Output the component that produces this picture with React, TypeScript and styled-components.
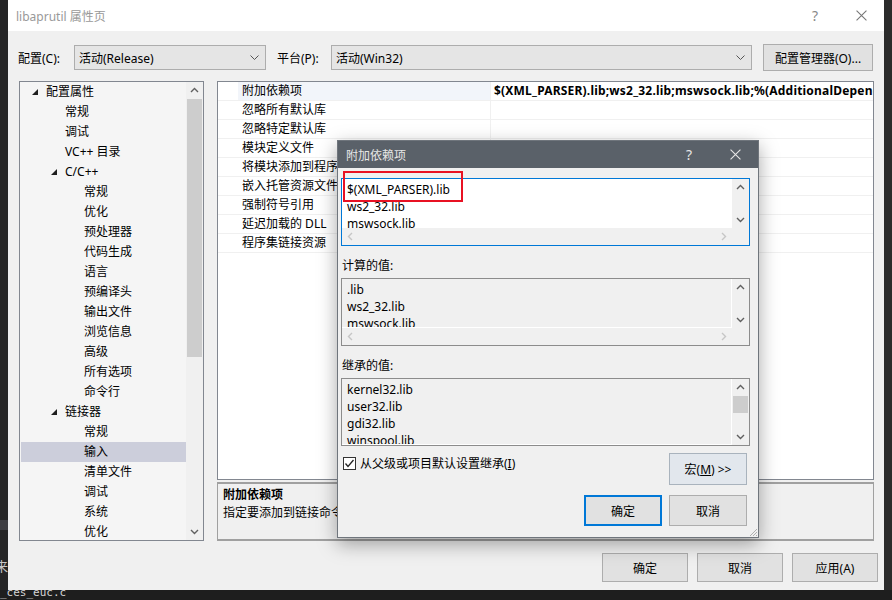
import React from "react";
import styled, { createGlobalStyle, css } from "styled-components";

const GlobalStyle = createGlobalStyle`
  html, body {
    margin: 0;
    padding: 0;
    background: #2b2b2b;
  }
  body {
    font-family: "Noto Sans", "Noto Sans CJK SC", sans-serif;
    font-size: 12px;
    color: #000;
  }
  * {
    box-sizing: border-box;
  }
`;

const FONT = `"Noto Sans", "Noto Sans CJK SC", sans-serif`;

const Desktop = styled.div`
  position: relative;
  width: 892px;
  height: 600px;
  overflow: hidden;
  background: #2b2b2b;
  display: grid;
  grid-template-columns: 8px 876px 8px;
  grid-template-rows: 590px 10px;
`;

const EditorGutter = styled.div`
  grid-column: 1;
  grid-row: 1;
  background: #252526;
  display: flex;
  flex-direction: column;
  overflow: hidden;
  color: #c8c8c8;
`;

const GutterBand = styled.div`
  margin-top: 520px;
  height: 10px;
  background: #3e3e42;
`;

const GutterGlyph = styled.div`
  margin-top: 28px;
  font-size: 13px;
  line-height: 16px;
  white-space: nowrap;
  margin-left: -5px;
`;

const EditorTab = styled.div`
  grid-column: 1 / 4;
  grid-row: 2;
  background: #1e1e1e;
  color: #d4d4d4;
  font-family: "DejaVu Sans Mono", monospace;
  font-size: 11px;
  line-height: 6px;
  white-space: nowrap;
  overflow: hidden;
`;

const Window = styled.div`
  grid-column: 2;
  grid-row: 1;
  background: #f0f0f0;
  display: flex;
  flex-direction: column;
  min-width: 0;
`;

const TitleBar = styled.div`
  height: 31px;
  flex: none;
  background: #fff;
  display: flex;
  align-items: center;
  padding-left: 8px;
  color: #999;
  font-size: 12px;
`;

const TitleText = styled.div`
  flex: 1;
`;

const CaptionButton = styled.div<{ $light?: boolean }>`
  width: 46px;
  height: 31px;
  display: flex;
  align-items: center;
  justify-content: center;
  color: ${(p) => (p.$light ? "#e6e6e6" : "#888")};
  font-size: 14px;
`;

const ConfigRow = styled.div`
  display: flex;
  align-items: center;
  height: 27px;
  margin-top: 13px;
  padding-left: 10px;
`;

const Label = styled.span<{ $width: number }>`
  width: ${(p) => p.$width}px;
  flex: none;
  white-space: nowrap;
`;

const Combo = styled.div<{ $width: number }>`
  width: ${(p) => p.$width}px;
  height: 25px;
  border: 1px solid #adadad;
  background: #e5e5e5;
  display: flex;
  align-items: center;
  padding: 0 6px 0 4px;
  margin-right: 11px;
`;

const ComboText = styled.span`
  flex: 1;
`;

const PushButton = styled.button<{ $w: number; $h: number; $default?: boolean; $tint?: boolean }>`
  width: ${(p) => p.$w}px;
  height: ${(p) => p.$h}px;
  flex: none;
  font-family: ${FONT};
  font-size: 12px;
  color: #000;
  padding: 0;
  background: ${(p) => (p.$tint ? "#e2e7ed" : "#e1e1e1")};
  border: 1px solid ${(p) => (p.$tint ? "#a9b3bd" : "#adadad")};
  ${(p) =>
    p.$default &&
    css`
      border: 2px solid #0078d7;
    `}
`;

const MainArea = styled.div`
  display: flex;
  gap: 13px;
  height: 460px;
  margin-top: 10px;
  padding: 0 10px 0 11px;
  min-width: 0;
`;

const Tree = styled.div`
  width: 185px;
  flex: none;
  border: 1px solid #828790;
  background: #f5f5f5;
  display: flex;
  overflow: hidden;
`;

const TreeList = styled.div`
  flex: 1;
  padding-left: 1px;
  overflow: hidden;
`;

const TreeRow = styled.div<{ $level: number; $selected?: boolean }>`
  height: 20px;
  line-height: 20px;
  display: flex;
  align-items: center;
  padding-left: ${(p) => 6 + p.$level * 19}px;
  background: ${(p) => (p.$selected ? "#cccedb" : "transparent")};
  white-space: nowrap;
`;

const Expander = styled.span`
  width: 19px;
  flex: none;
  display: flex;
  align-items: center;
  padding-left: 5px;
`;

const VScroll = styled.div<{ $bg?: string }>`
  width: 17px;
  flex: none;
  background: ${(p) => p.$bg || "#f0f0f0"};
  display: flex;
  flex-direction: column;
  align-items: stretch;
`;

const ArrowBox = styled.div`
  height: 17px;
  flex: none;
  display: flex;
  align-items: center;
  justify-content: center;
`;

const Track = styled.div`
  flex: 1;
  display: flex;
  flex-direction: column;
`;

const Thumb = styled.div<{ $offset: number; $size: number }>`
  margin: ${(p) => p.$offset}px 1px 0;
  height: ${(p) => p.$size}px;
  background: #cdcdcd;
`;

const RightColumn = styled.div`
  flex: 1;
  min-width: 0;
  display: flex;
  flex-direction: column;
  gap: 2px;
`;

const PropGrid = styled.div`
  height: 399px;
  border: 1px solid #828790;
  background: #fff;
  overflow: hidden;
`;

const PropRow = styled.div`
  display: flex;
  height: 19px;
  line-height: 18px;
  border-bottom: 1px solid #f0f0f0;
  white-space: nowrap;
  min-width: 0;
`;

const Gutter = styled.div`
  width: 20px;
  flex: none;
  background: #fff;
`;

const PropName = styled.div<{ $active?: boolean }>`
  width: 253px;
  flex: none;
  padding-left: 4px;
  border-right: 1px solid #f0f0f0;
  background: ${(p) => (p.$active ? "#f2f5fa" : "#fff")};
  overflow: hidden;
`;

const PropValue = styled.div`
  flex: 1;
  min-width: 0;
  padding-left: 3px;
  font-weight: 700;
  letter-spacing: 0.2px;
  overflow: hidden;
`;

const Description = styled.div`
  flex: 1;
  border: 1px solid #a0a0a0;
  border-top: 2px solid #a0a0a0;
  border-bottom: 2px solid #a0a0a0;
  background: #f0f0f0;
  padding: 2px 5px;
  line-height: 18px;
  overflow: hidden;
  white-space: nowrap;
`;

const DescTitle = styled.div`
  font-weight: 700;
`;

const Footer = styled.div`
  display: flex;
  justify-content: flex-end;
  gap: 9px;
  margin-top: 12px;
  padding-right: 6px;
`;

/* ---------- dialog ---------- */

const Dialog = styled.div`
  position: absolute;
  left: 337px;
  top: 140px;
  width: 422px;
  height: 398px;
  background: #f0f0f0;
  border: 1px solid #6f757c;
  box-shadow: 0 6px 18px rgba(0, 0, 0, 0.35);
  display: flex;
  flex-direction: column;
`;

const DialogTitle = styled.div`
  height: 27px;
  flex: none;
  background: #5a6169;
  color: #e6e6e6;
  display: flex;
  align-items: center;
  padding-left: 8px;
`;

const DialogBody = styled.div`
  position: relative;
  flex: 1;
  padding: 10px 8px 0 3px;
  display: flex;
  flex-direction: column;
`;

const RedMark = styled.div`
  position: absolute;
  left: 5px;
  top: 3px;
  width: 120px;
  height: 31px;
  border: 2px solid #e81123;
  pointer-events: none;
`;

const ListBox = styled.div<{ $focused?: boolean }>`
  height: 68px;
  flex: none;
  border: 1px solid ${(p) => (p.$focused ? "#0078d7" : "#8c8c8c")};
  background: ${(p) => (p.$focused ? "#fff" : "#f0f0f0")};
  display: flex;
  flex-direction: column;
`;

const ListMain = styled.div`
  flex: 1;
  display: flex;
  min-height: 0;
`;

const ListLines = styled.div<{ $focused?: boolean }>`
  flex: 1;
  padding: 2px 0 0 5px;
  line-height: 17px;
  overflow: hidden;
  border-right: 1px solid #fff;
  border-bottom: ${(p) => (p.$focused ? "none" : "1px solid #fff")};
`;

const HScroll = styled.div`
  height: 17px;
  flex: none;
  display: flex;
  background: #f0f0f0;
`;

const HArrow = styled.div`
  width: 17px;
  display: flex;
  align-items: center;
  justify-content: center;
`;

const HTrack = styled.div`
  flex: 1;
`;

const Corner = styled.div`
  width: 17px;
  background: #f0f0f0;
`;

const FieldLabel = styled.div`
  margin: 11px 0 3px 1px;
  line-height: 18px;
`;

const OptionRow = styled.div`
  display: flex;
  align-items: flex-start;
  margin-top: 7px;
  padding-right: 3px;
`;

const CheckLabel = styled.label`
  flex: 1;
  display: flex;
  align-items: center;
  gap: 4px;
  padding: 1px 0 0 2px;
`;

const CheckBox = styled.span`
  width: 13px;
  height: 13px;
  border: 1px solid #333;
  background: #fff;
  display: flex;
  align-items: center;
  justify-content: center;
`;

const ButtonRow = styled.div`
  display: flex;
  justify-content: flex-end;
  gap: 7px;
  margin-top: 10px;
  padding-right: 3px;
`;

const Grip = styled.div`
  position: absolute;
  right: 0;
  bottom: 0;
  width: 10px;
  height: 10px;
  display: flex;
`;

const U = styled.span`
  text-decoration: underline;
`;

type Dir = "up" | "down" | "left" | "right";

const Chevron: React.FC<{ dir: Dir; color?: string }> = ({ dir, color = "#606060" }) => {
  const pts: Record<Dir, string> = {
    up: "1,6 4.5,2.5 8,6",
    down: "1,3 4.5,6.5 8,3",
    left: "6,1 2.5,4.5 6,8",
    right: "3,1 6.5,4.5 3,8",
  };
  return (
    <svg width="9" height="9" viewBox="0 0 9 9">
      <polyline points={pts[dir]} fill="none" stroke={color} strokeWidth="1.4" />
    </svg>
  );
};

const CloseGlyph: React.FC<{ color: string; size: number }> = ({ color, size }) => (
  <svg width={size} height={size} viewBox="0 0 10 10">
    <path d="M0.5 0.5 L9.5 9.5 M9.5 0.5 L0.5 9.5" stroke={color} strokeWidth="1" />
  </svg>
);

const DropGlyph = () => (
  <svg width="9" height="6" viewBox="0 0 9 6">
    <polyline points="0.5,0.5 4.5,4.5 8.5,0.5" fill="none" stroke="#555" strokeWidth="1" />
  </svg>
);

const Triangle = () => (
  <svg width="7" height="7" viewBox="0 0 7 7">
    <polygon points="6,0 6,6 0,6" fill="#1e1e1e" />
  </svg>
);

const treeItems: { label: string; level: number; open?: boolean; selected?: boolean }[] = [
  { label: "配置属性", level: 0, open: true },
  { label: "常规", level: 1 },
  { label: "调试", level: 1 },
  { label: "VC++ 目录", level: 1 },
  { label: "C/C++", level: 1, open: true },
  { label: "常规", level: 2 },
  { label: "优化", level: 2 },
  { label: "预处理器", level: 2 },
  { label: "代码生成", level: 2 },
  { label: "语言", level: 2 },
  { label: "预编译头", level: 2 },
  { label: "输出文件", level: 2 },
  { label: "浏览信息", level: 2 },
  { label: "高级", level: 2 },
  { label: "所有选项", level: 2 },
  { label: "命令行", level: 2 },
  { label: "链接器", level: 1, open: true },
  { label: "常规", level: 2 },
  { label: "输入", level: 2, selected: true },
  { label: "清单文件", level: 2 },
  { label: "调试", level: 2 },
  { label: "系统", level: 2 },
  { label: "优化", level: 2 },
];

const properties = [
  { name: "附加依赖项", value: "$(XML_PARSER).lib;ws2_32.lib;mswsock.lib;%(AdditionalDependencies)" },
  { name: "忽略所有默认库", value: "" },
  { name: "忽略特定默认库", value: "" },
  { name: "模块定义文件", value: "" },
  { name: "将模块添加到程序集", value: "" },
  { name: "嵌入托管资源文件", value: "" },
  { name: "强制符号引用", value: "" },
  { name: "延迟加载的 DLL", value: "" },
  { name: "程序集链接资源", value: "" },
];

interface IListProps {
  lines: string[];
  focused?: boolean;
  hScroll?: boolean;
  thumb?: boolean;
}

const ValueList: React.FC<IListProps> = ({ lines, focused, hScroll, thumb }) => (
  <ListBox $focused={focused}>
    <ListMain>
      <ListLines $focused={focused}>
        {lines.map((l, i) => (
          <div key={i}>{l}</div>
        ))}
      </ListLines>
      <VScroll>
        <ArrowBox>
          <Chevron dir="up" />
        </ArrowBox>
        <Track>{thumb && <Thumb $offset={0} $size={17} />}</Track>
        <ArrowBox>
          <Chevron dir="down" />
        </ArrowBox>
      </VScroll>
    </ListMain>
    {hScroll && (
      <HScroll>
        <HArrow>
          <Chevron dir="left" color="#c6c6c6" />
        </HArrow>
        <HTrack />
        <HArrow>
          <Chevron dir="right" color="#c6c6c6" />
        </HArrow>
        <Corner />
      </HScroll>
    )}
  </ListBox>
);

export default function App() {
  return (
    <>
      <GlobalStyle />
      <Desktop>
        <EditorGutter>
          <GutterBand />
          <GutterGlyph>来</GutterGlyph>
        </EditorGutter>
        <Window>
          <TitleBar>
            <TitleText>libaprutil 属性页</TitleText>
            <CaptionButton>?</CaptionButton>
            <CaptionButton>
              <CloseGlyph color="#777" size={11} />
            </CaptionButton>
          </TitleBar>

          <ConfigRow>
            <Label $width={56}>配置(C):</Label>
            <Combo $width={192}>
              <ComboText>活动(Release)</ComboText>
              <DropGlyph />
            </Combo>
            <Label $width={54}>平台(P):</Label>
            <Combo $width={421}>
              <ComboText>活动(Win32)</ComboText>
              <DropGlyph />
            </Combo>
            <PushButton $w={110} $h={27}>
              配置管理器(O)...
            </PushButton>
          </ConfigRow>

          <MainArea>
            <Tree>
              <TreeList>
                {treeItems.map((t, i) => (
                  <TreeRow key={i} $level={t.level} $selected={t.selected}>
                    <Expander>{t.open && <Triangle />}</Expander>
                    {t.label}
                  </TreeRow>
                ))}
              </TreeList>
              <VScroll>
                <ArrowBox>
                  <Chevron dir="up" />
                </ArrowBox>
                <Track>
                  <Thumb $offset={0} $size={258} />
                </Track>
                <ArrowBox>
                  <Chevron dir="down" />
                </ArrowBox>
              </VScroll>
            </Tree>

            <RightColumn>
              <PropGrid>
                {properties.map((p, i) => (
                  <PropRow key={i}>
                    <Gutter />
                    <PropName $active={i === 0}>{p.name}</PropName>
                    <PropValue>{p.value}</PropValue>
                  </PropRow>
                ))}
              </PropGrid>
              <Description>
                <DescTitle>附加依赖项</DescTitle>
                <div>指定要添加到链接命令行的其他项。[例如 kernel32.lib]</div>
              </Description>
            </RightColumn>
          </MainArea>

          <Footer>
            <PushButton $w={86} $h={29}>确定</PushButton>
            <PushButton $w={86} $h={29}>取消</PushButton>
            <PushButton $w={86} $h={29}>应用(A)</PushButton>
          </Footer>
        </Window>

        <EditorTab>_ces_euc.c</EditorTab>

        <Dialog>
          <DialogTitle>
            <TitleText>附加依赖项</TitleText>
            <CaptionButton $light>?</CaptionButton>
            <CaptionButton $light>
              <CloseGlyph color="#e6e6e6" size={11} />
            </CaptionButton>
          </DialogTitle>
          <DialogBody>
            <ValueList focused hScroll lines={["$(XML_PARSER).lib", "ws2_32.lib", "mswsock.lib"]} />
            <RedMark />
            <FieldLabel>计算的值:</FieldLabel>
            <ValueList hScroll lines={[".lib", "ws2_32.lib", "mswsock.lib"]} />
            <FieldLabel>继承的值:</FieldLabel>
            <ValueList thumb lines={["kernel32.lib", "user32.lib", "gdi32.lib", "winspool.lib"]} />
            <OptionRow>
              <CheckLabel>
                <CheckBox>
                  <svg width="11" height="11" viewBox="0 0 11 11">
                    <polyline points="1.5,5.5 4,8.5 9.5,2" fill="none" stroke="#222" strokeWidth="1.3" />
                  </svg>
                </CheckBox>
                <span>
                  从父级或项目默认设置继承(<U>I</U>)
                </span>
              </CheckLabel>
              <PushButton $w={78} $h={32} $tint>
                宏(<U>M</U>) &gt;&gt;
              </PushButton>
            </OptionRow>
            <ButtonRow>
              <PushButton $w={78} $h={31} $default>
                确定
              </PushButton>
              <PushButton $w={78} $h={31}>
                取消
              </PushButton>
            </ButtonRow>
            <Grip>
              <svg width="10" height="10" viewBox="0 0 10 10">
                <path d="M9 2 L2 9 M9 5 L5 9 M9 8 L8 9" stroke="#b0b0b0" strokeWidth="1" />
              </svg>
            </Grip>
          </DialogBody>
        </Dialog>
      </Desktop>
    </>
  );
}
